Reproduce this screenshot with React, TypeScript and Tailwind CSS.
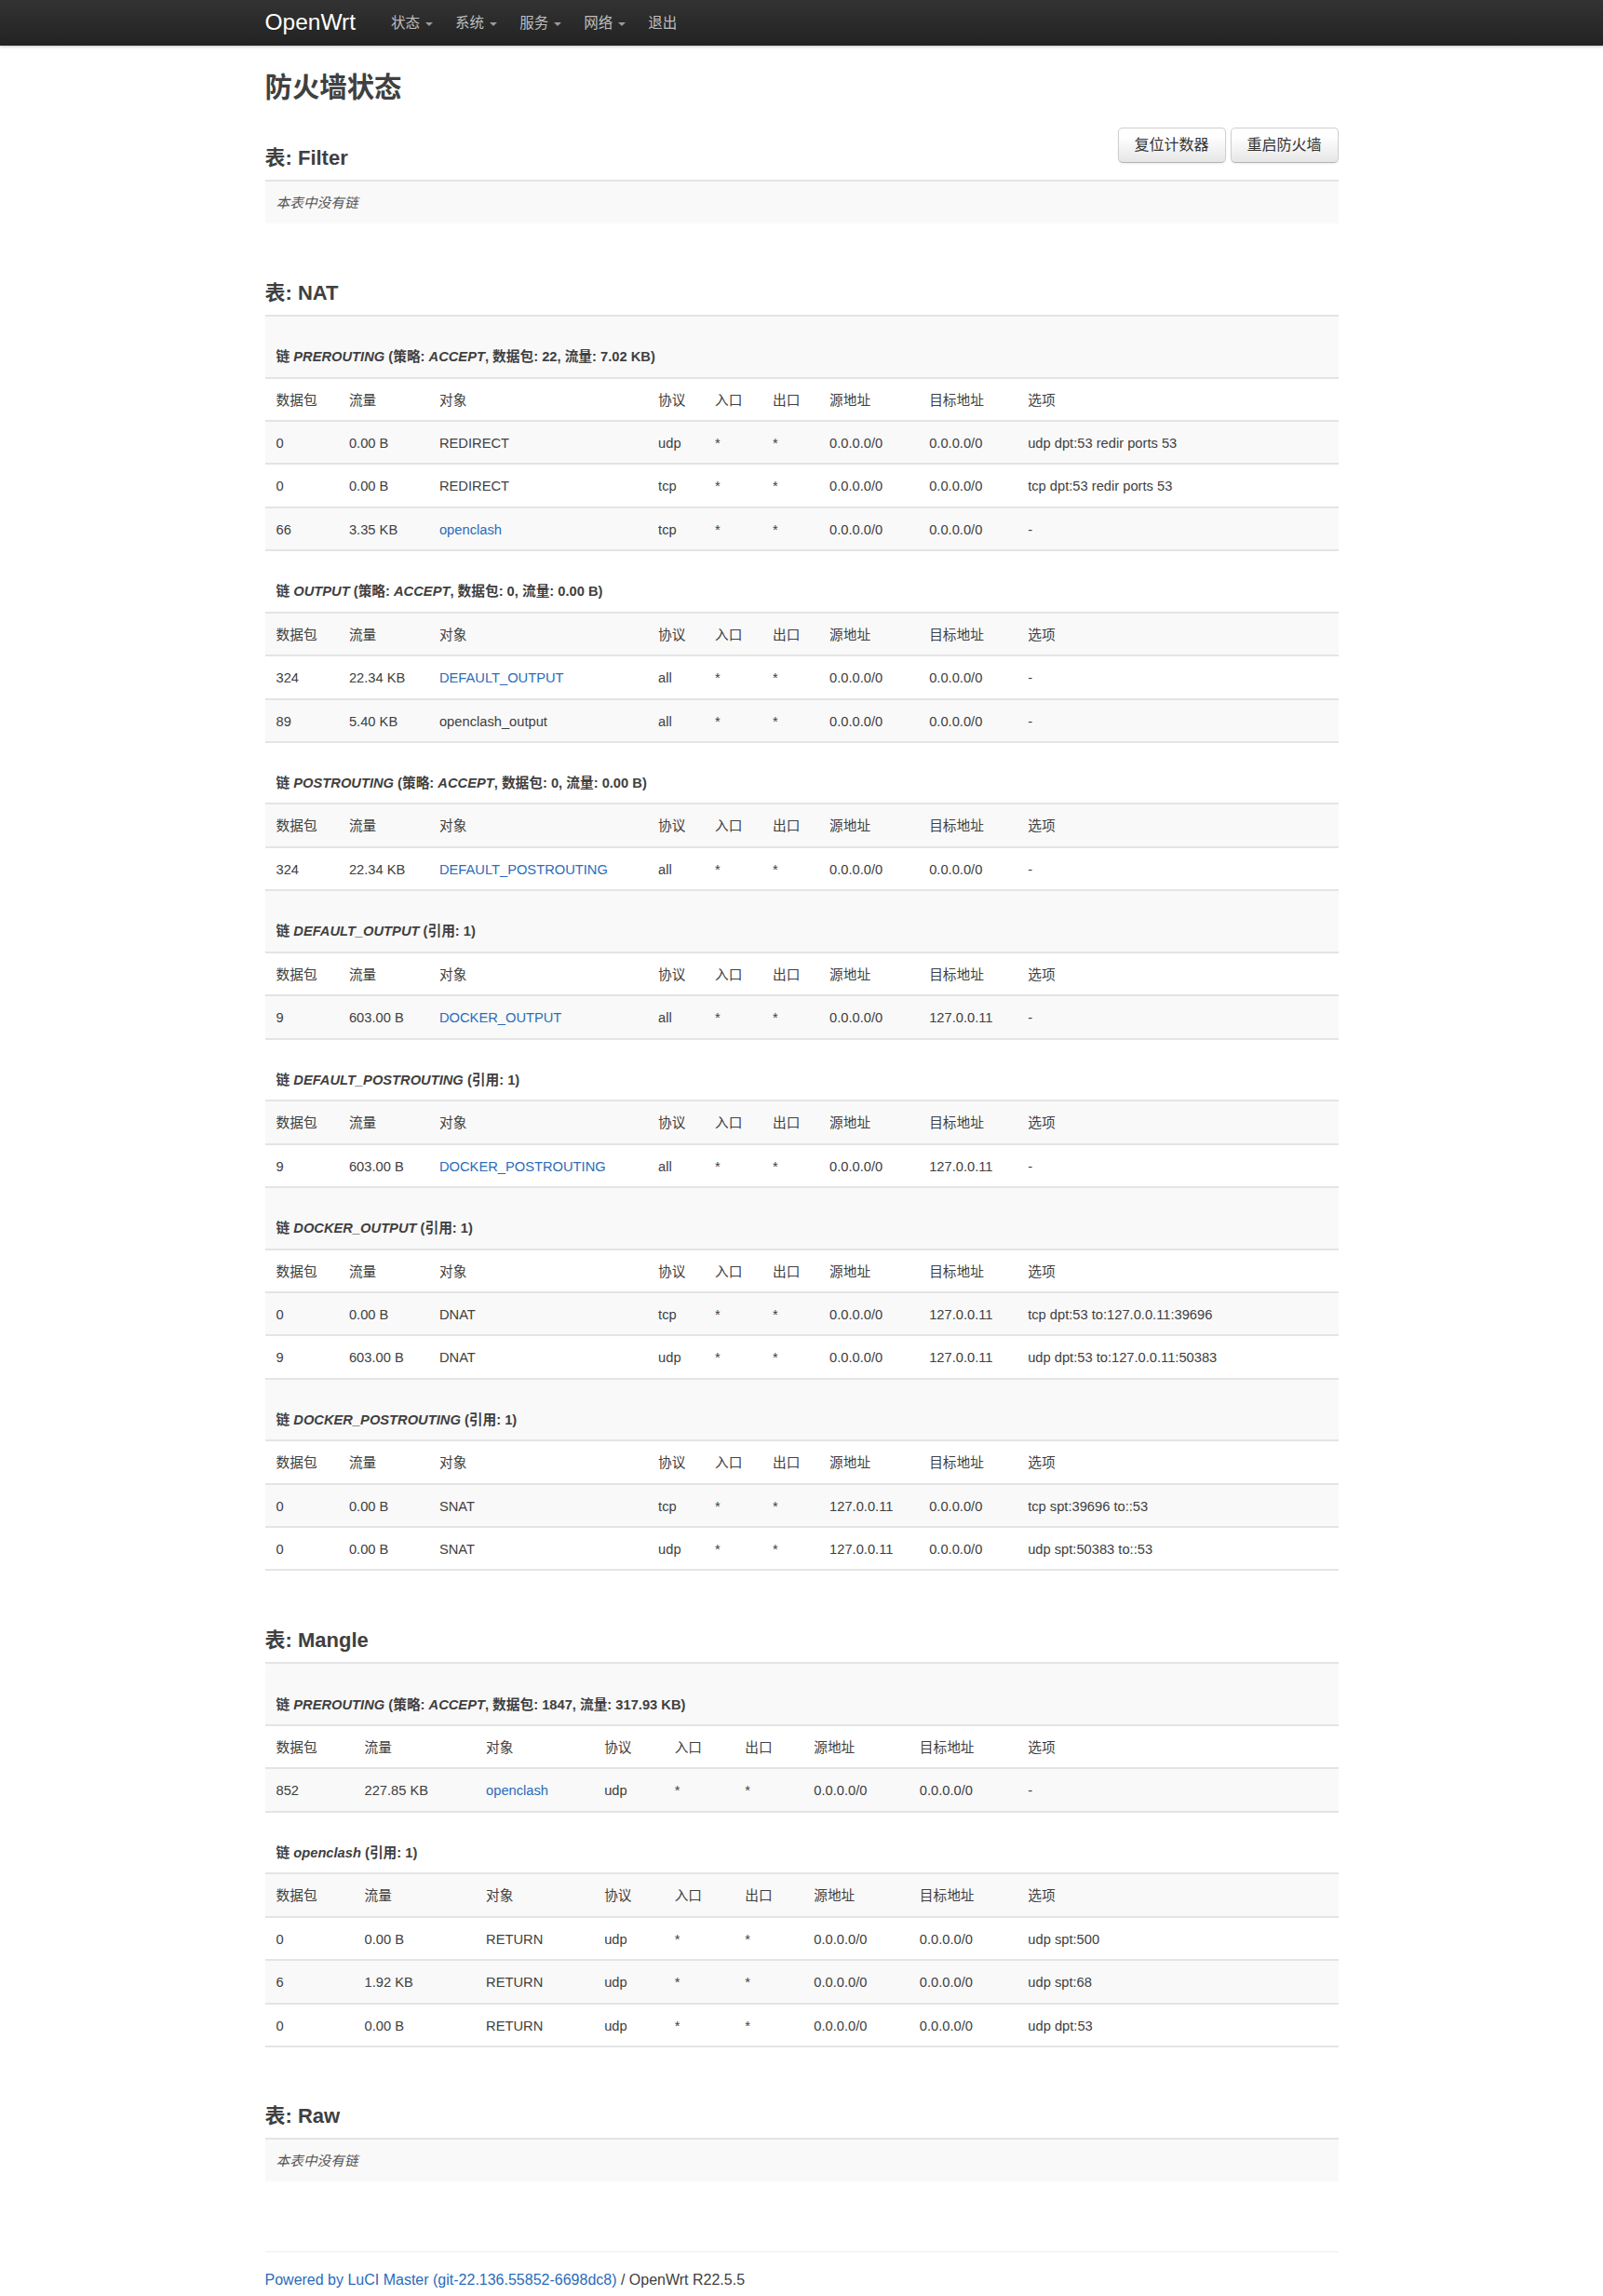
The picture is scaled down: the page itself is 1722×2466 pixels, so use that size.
import React from 'react'

type Cell = string | { link: string }

type Chain = {
  name: string
  policy?: string
  packets?: string
  traffic?: string
  refs?: string
  rules: Cell[][]
}

const FONT = "font-['Liberation_Sans','Noto_Sans_CJK_SC',sans-serif]"

const natChains: Chain[] = [
  {
    name: 'PREROUTING', policy: 'ACCEPT', packets: '22', traffic: '7.02 KB',
    rules: [
      ['0', '0.00 B', 'REDIRECT', 'udp', '*', '*', '0.0.0.0/0', '0.0.0.0/0', 'udp dpt:53 redir ports 53'],
      ['0', '0.00 B', 'REDIRECT', 'tcp', '*', '*', '0.0.0.0/0', '0.0.0.0/0', 'tcp dpt:53 redir ports 53'],
      ['66', '3.35 KB', { link: 'openclash' }, 'tcp', '*', '*', '0.0.0.0/0', '0.0.0.0/0', '-'],
    ],
  },
  {
    name: 'OUTPUT', policy: 'ACCEPT', packets: '0', traffic: '0.00 B',
    rules: [
      ['324', '22.34 KB', { link: 'DEFAULT_OUTPUT' }, 'all', '*', '*', '0.0.0.0/0', '0.0.0.0/0', '-'],
      ['89', '5.40 KB', 'openclash_output', 'all', '*', '*', '0.0.0.0/0', '0.0.0.0/0', '-'],
    ],
  },
  {
    name: 'POSTROUTING', policy: 'ACCEPT', packets: '0', traffic: '0.00 B',
    rules: [
      ['324', '22.34 KB', { link: 'DEFAULT_POSTROUTING' }, 'all', '*', '*', '0.0.0.0/0', '0.0.0.0/0', '-'],
    ],
  },
  {
    name: 'DEFAULT_OUTPUT', refs: '1',
    rules: [
      ['9', '603.00 B', { link: 'DOCKER_OUTPUT' }, 'all', '*', '*', '0.0.0.0/0', '127.0.0.11', '-'],
    ],
  },
  {
    name: 'DEFAULT_POSTROUTING', refs: '1',
    rules: [
      ['9', '603.00 B', { link: 'DOCKER_POSTROUTING' }, 'all', '*', '*', '0.0.0.0/0', '127.0.0.11', '-'],
    ],
  },
  {
    name: 'DOCKER_OUTPUT', refs: '1',
    rules: [
      ['0', '0.00 B', 'DNAT', 'tcp', '*', '*', '0.0.0.0/0', '127.0.0.11', 'tcp dpt:53 to:127.0.0.11:39696'],
      ['9', '603.00 B', 'DNAT', 'udp', '*', '*', '0.0.0.0/0', '127.0.0.11', 'udp dpt:53 to:127.0.0.11:50383'],
    ],
  },
  {
    name: 'DOCKER_POSTROUTING', refs: '1',
    rules: [
      ['0', '0.00 B', 'SNAT', 'tcp', '*', '*', '127.0.0.11', '0.0.0.0/0', 'tcp spt:39696 to::53'],
      ['0', '0.00 B', 'SNAT', 'udp', '*', '*', '127.0.0.11', '0.0.0.0/0', 'udp spt:50383 to::53'],
    ],
  },
]

const mangleChains: Chain[] = [
  {
    name: 'PREROUTING', policy: 'ACCEPT', packets: '1847', traffic: '317.93 KB',
    rules: [
      ['852', '227.85 KB', { link: 'openclash' }, 'udp', '*', '*', '0.0.0.0/0', '0.0.0.0/0', '-'],
    ],
  },
  {
    name: 'openclash', refs: '1',
    rules: [
      ['0', '0.00 B', 'RETURN', 'udp', '*', '*', '0.0.0.0/0', '0.0.0.0/0', 'udp spt:500'],
      ['6', '1.92 KB', 'RETURN', 'udp', '*', '*', '0.0.0.0/0', '0.0.0.0/0', 'udp spt:68'],
      ['0', '0.00 B', 'RETURN', 'udp', '*', '*', '0.0.0.0/0', '0.0.0.0/0', 'udp dpt:53'],
    ],
  },
]

const headers = ['数据包', '流量', '对象', '协议', '入口', '出口', '源地址', '目标地址', '选项']

function NavItem({ label, caret = true }: { label: string; caret?: boolean }) {
  return (
    <div className="flex items-center gap-[6px] px-[12px] h-full text-[15.5px] text-[#bfbfbf]">
      <span>{label}</span>
      {caret && (
        <span className="mt-[2px] w-0 h-0 border-x-[4px] border-x-transparent border-t-[4px] border-t-[#9a9a9a]" />
      )}
    </div>
  )
}

function ChainTitle({ chain }: { chain: Chain }) {
  return (
    <span>
      链 <em>{chain.name}</em>{' '}
      {chain.policy ? (
        <>(策略: <em>{chain.policy}</em>, 数据包: {chain.packets}, 流量: {chain.traffic})</>
      ) : (
        <>(引用: {chain.refs})</>
      )}
    </span>
  )
}

function RuleTable({ chains, widths }: { chains: Chain[]; widths: number[] }) {
  let idx = 0
  const stripe = () => (idx++ % 2 === 0 ? 'bg-[#f9f9f9]' : 'bg-white')
  const cell = 'border-t-2 border-t-[#e4e4e4] pl-[12px] pt-[12px] pb-[10.4px] leading-[22px] text-left font-normal whitespace-nowrap align-top'

  return (
    <table className="w-full table-fixed border-b-2 border-b-[#e4e4e4]">
      <colgroup>
        {widths.map((w, i) => (
          <col key={i} style={{ width: w }} />
        ))}
      </colgroup>
      <tbody>
        {chains.map((chain) => (
          <React.Fragment key={chain.name}>
            <tr className={stripe()}>
              <td colSpan={9} className="border-t-2 border-t-[#e4e4e4] pl-[12px] pt-[32.2px] pb-[10.4px] leading-[22px] font-bold text-[#404040]">
                <ChainTitle chain={chain} />
              </td>
            </tr>
            <tr className={stripe()}>
              {headers.map((h) => (
                <th key={h} className={cell}>{h}</th>
              ))}
            </tr>
            {chain.rules.map((rule, r) => (
              <tr key={r} className={stripe()}>
                {rule.map((c, i) => (
                  <td key={i} className={cell}>
                    {typeof c === 'string' ? c : <a className="text-[#2a6cba]">{c.link}</a>}
                  </td>
                ))}
              </tr>
            ))}
          </React.Fragment>
        ))}
      </tbody>
    </table>
  )
}

function EmptyTable() {
  return (
    <div className="border-t-2 border-t-[#e4e4e4] bg-[#f9f9f9] pl-[12px] pt-[12px] pb-[11px] leading-[22px] italic text-[14.7px] text-[#555]">
      本表中没有链
    </div>
  )
}

function SectionTitle({ children }: { children: React.ReactNode }) {
  return <h3 className="text-[22px] leading-[30px] font-bold text-[#404040]">{children}</h3>
}

function Button({ children }: { children: React.ReactNode }) {
  return (
    <button className="w-[116px] h-[38px] flex items-center justify-center rounded-[5px] border border-[#cfcfcf] border-b-[#b3b3b3] bg-linear-to-b from-white from-25% to-[#e6e6e6] text-[16px] text-[#333] shadow-[inset_0_1px_0_rgba(255,255,255,0.2),0_1px_2px_rgba(0,0,0,0.08)]">
      {children}
    </button>
  )
}

export default function App() {
  return (
    <div className={`${FONT} min-h-[2466px] bg-white text-[14.7px] text-[#404040]`}>
      <div className="h-[49px] bg-linear-to-b from-[#333] to-[#222] shadow-[0_1px_3px_rgba(0,0,0,0.25)]">
        <div className="w-[1153px] mx-auto h-full flex items-center">
          <div className="text-[24.5px] text-white pr-[26px] leading-none">OpenWrt</div>
          <div className="flex h-full items-center">
            <NavItem label="状态" />
            <NavItem label="系统" />
            <NavItem label="服务" />
            <NavItem label="网络" />
            <NavItem label="退出" caret={false} />
          </div>
        </div>
      </div>

      <div className="w-[1153px] mx-auto">
        <h2 className="mt-[27px] text-[29.4px] leading-[36px] font-bold text-[#404040]">防火墙状态</h2>

        <div className="mt-[25px] flex justify-between items-start mb-[8px]">
          <div className="mt-[18px]">
            <SectionTitle>表: Filter</SectionTitle>
          </div>
          <div className="flex gap-[5px]">
            <Button>复位计数器</Button>
            <Button>重启防火墙</Button>
          </div>
        </div>
        <EmptyTable />

        <div className="mt-[60px] mb-[8px]">
          <SectionTitle>表: NAT</SectionTitle>
        </div>
        <RuleTable chains={natChains} widths={[78.4, 97, 235, 61, 62, 61, 107, 106, 345]} />

        <div className="mt-[60px] mb-[8px]">
          <SectionTitle>表: Mangle</SectionTitle>
        </div>
        <RuleTable chains={mangleChains} widths={[95, 130.5, 127, 75.5, 75.5, 74, 113.5, 116.5, 345]} />

        <div className="mt-[59px] mb-[8px]">
          <SectionTitle>表: Raw</SectionTitle>
        </div>
        <EmptyTable />

        <div className="mt-[75px] border-t border-t-[#eeeeee] pt-[18px] leading-[24px] text-[16px]">
          <a className="text-[#2a6cba]">Powered by LuCI Master (git-22.136.55852-6698dc8)</a>
          <span> / OpenWrt R22.5.5</span>
        </div>
      </div>
    </div>
  )
}
